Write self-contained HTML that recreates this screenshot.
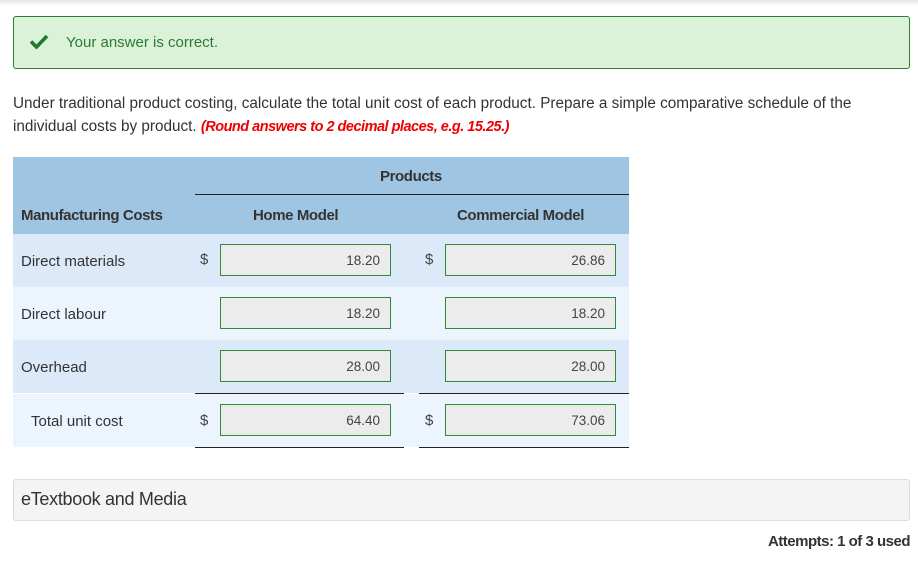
<!DOCTYPE html>
<html><head><style>
body{margin:0;width:918px;height:563px;background:#fff;font-family:"Liberation Sans",sans-serif;color:#333;position:relative;overflow:hidden}
.a{position:absolute;white-space:nowrap}
.top{left:0;top:0;width:918px;height:6px;background:linear-gradient(#e6e6e6,#fff)}
.ok{left:13px;top:16px;width:895px;height:51px;background:#dcf2d8;border:1px solid #2e7d32;border-radius:3px}
.q{left:13px;top:92px;font-size:15.3px;line-height:23px;color:#333}
.red{color:#e00;font-weight:bold;font-style:italic;font-size:14.5px;letter-spacing:-0.5px}
.hd{left:13px;top:157px;width:616px;height:77px;background:#9fc5e2}
.r{left:13px;width:616px;height:53px}
.lbl{font-size:15px;color:#333}
.hl{font-size:15px;font-weight:bold;color:#333;letter-spacing:-0.4px}
.in{width:171px;height:32px;border:1px solid #2e8b3a;background:#ececec;box-sizing:border-box;font-size:13.5px;text-align:right;padding-right:10px;line-height:31px;color:#444}
.ln{height:1px;background:#222}
.d{font-size:15px;color:#444}
</style></head><body>
<div class="a top"></div>
<div class="a ok"></div>
<svg class="a" style="left:29px;top:33px" width="20" height="16" viewBox="0 0 20 16"><path d="M2 8.5 L7.5 14 L18 3" stroke="#1e7a2e" stroke-width="3.6" fill="none"/></svg>
<div class="a" style="left:66px;top:34px;font-size:15px;color:#2a7a37">Your answer is correct.</div>
<div class="a q">Under traditional product costing, calculate the total unit cost of each product. Prepare a simple comparative schedule of the<br>individual costs by product. <span class="red">(Round answers to 2 decimal places, e.g. 15.25.)</span></div>
<div class="a hd"></div>
<div class="a ln" style="left:195px;top:194px;width:434px"></div>
<div class="a hl" style="left:380px;top:168px">Products</div>
<div class="a hl" style="left:21px;top:207px">Manufacturing Costs</div>
<div class="a hl" style="left:253px;top:207px">Home Model</div>
<div class="a hl" style="left:457px;top:207px">Commercial Model</div>
<div class="a r" style="top:234px;background:#dce9f8"></div>
<div class="a r" style="top:287px;background:#ecf4fd"></div>
<div class="a r" style="top:340px;background:#dce9f8"></div>
<div class="a r" style="top:394px;background:#ecf4fd"></div>
<div class="a lbl" style="left:21px;top:253px">Direct materials</div>
<div class="a lbl" style="left:21px;top:306px">Direct labour</div>
<div class="a lbl" style="left:21px;top:359px">Overhead</div>
<div class="a lbl" style="left:31px;top:413px">Total unit cost</div>
<div class="a d" style="left:200px;top:251px">$</div>
<div class="a d" style="left:425px;top:251px">$</div>
<div class="a d" style="left:200px;top:412px">$</div>
<div class="a d" style="left:425px;top:412px">$</div>
<div class="a in" style="left:220px;top:244px">18.20</div>
<div class="a in" style="left:445px;top:244px">26.86</div>
<div class="a in" style="left:220px;top:297px">18.20</div>
<div class="a in" style="left:445px;top:297px">18.20</div>
<div class="a in" style="left:220px;top:350px">28.00</div>
<div class="a in" style="left:445px;top:350px">28.00</div>
<div class="a in" style="left:220px;top:404px">64.40</div>
<div class="a in" style="left:445px;top:404px">73.06</div>
<div class="a ln" style="left:195px;top:393px;width:209px"></div>
<div class="a ln" style="left:419px;top:393px;width:210px"></div>
<div class="a ln" style="left:195px;top:447px;width:209px"></div>
<div class="a ln" style="left:419px;top:447px;width:210px"></div>
<div class="a" style="left:13px;top:479px;width:895px;height:40px;background:#f4f4f4;border:1px solid #ddd;border-radius:3px"></div>
<div class="a" style="left:21px;top:489px;font-size:18px;color:#333;letter-spacing:-0.3px">eTextbook and Media</div>
<div class="a" style="right:8px;top:533px;font-size:15px;font-weight:bold;color:#333;letter-spacing:-0.5px">Attempts: 1 of 3 used</div>
</body></html>
